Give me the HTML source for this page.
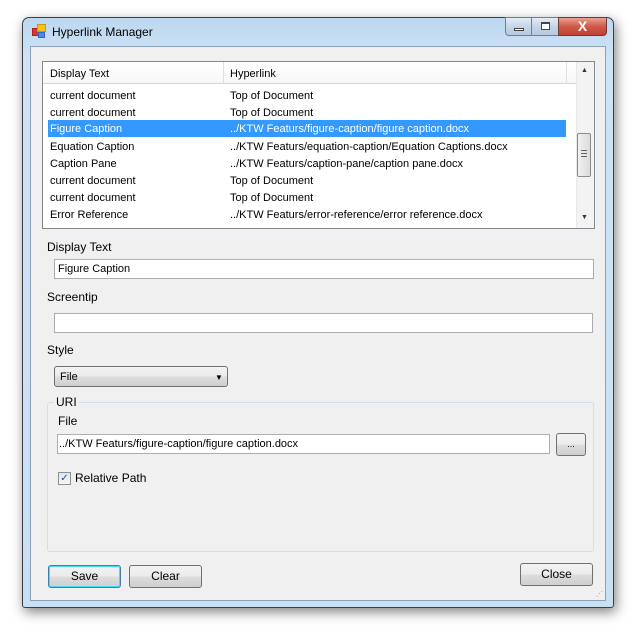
<!DOCTYPE html>
<html><head><style>
*{margin:0;padding:0;box-sizing:border-box}
body{width:644px;height:627px;background:#fff;position:relative;overflow:hidden;font-family:"Liberation Sans",sans-serif;font-size:11px;color:#000}
.a{position:absolute}
.win{left:22px;top:17px;width:592px;height:591px;border:1px solid #3a3f46;border-radius:7px 7px 3px 3px;background:linear-gradient(#bcd7f0,#cfe3f6 40px,#c9dff3);box-shadow:2px 4px 12px rgba(0,0,0,.5)}
.client{left:30px;top:46px;width:576px;height:555px;background:#f0f0f0;border:1px solid #8da2b8}
.tb{background:#fff;border:1px solid #abadb3;border-top-color:#b0b0b0}
.btn{border:1px solid #707070;border-radius:3px;background:linear-gradient(#f2f2f2,#ebebeb 50%,#dddddd 51%,#cfcfcf);text-align:center;font-size:12px}
.row{position:absolute;left:48px;width:518px;height:17px;line-height:17px;font-size:11px}
.row span{position:absolute;top:1px}
.row .c1{left:2px}.row .c2{left:182px}
</style></head><body>
<div class="a win"></div>
<div class="a" style="left:31px;top:23px;width:16px;height:16px">
<div class="a" style="left:1px;top:5px;width:7px;height:8px;background:#d33;border:1px solid #a22"></div>
<div class="a" style="left:6px;top:1px;width:9px;height:8px;background:#f5c21d;border:1px solid #c90"></div>
<div class="a" style="left:7px;top:9px;width:7px;height:6px;background:#4b8be0;border:1px solid #36c"></div>
</div>
<div class="a" style="left:52px;top:25px;font-size:12px">Hyperlink Manager</div>
<div class="a" style="left:505px;top:17px;width:27px;height:19px;border:1px solid #6d7d92;border-radius:0 0 0 4px;background:linear-gradient(#e3ecf6,#c5d5e8 50%,#b7c9de)"><div class="a" style="left:8px;top:10px;width:10px;height:3px;border:1px solid #444;background:#fff"></div></div>
<div class="a" style="left:531px;top:17px;width:28px;height:19px;border:1px solid #6d7d92;background:linear-gradient(#e3ecf6,#c5d5e8 50%,#b7c9de)"><div class="a" style="left:9px;top:4px;width:9px;height:8px;border:1px solid #444;border-top-width:2px;background:#fff"></div></div>
<div class="a" style="left:558px;top:17px;width:49px;height:19px;border:1px solid #6d3a36;border-radius:0 0 4px 0;background:linear-gradient(#e8a093,#d0594a 50%,#c2402f);color:#fff;font-weight:bold;font-size:14px;text-align:center;line-height:16px">X</div>
<div class="a client"></div>
<div class="a" style="left:42px;top:61px;width:553px;height:168px;background:#fff;border:1px solid #828790"></div>
<div class="a" style="left:43px;top:62px;width:533px;height:22px;background:linear-gradient(#fff,#f6f7f9);border-bottom:1px solid #d5d5d5"></div>
<div class="a" style="left:223px;top:62px;width:1px;height:22px;background:#e0e0e0"></div>
<div class="a" style="left:566px;top:62px;width:1px;height:22px;background:#e0e0e0"></div>
<div class="a" style="left:50px;top:68px">Display Text</div>
<div class="a" style="left:230px;top:68px">Hyperlink</div>
<div class="a" style="left:576px;top:62px;width:18px;height:166px;background:#f3f3f3;border-left:1px solid #e8e8e8"></div>
<div class="a" style="left:581px;top:67px;font-size:7px;color:#333">▲</div>
<div class="a" style="left:581px;top:214px;font-size:7px;color:#333">▼</div>
<div class="a" style="left:577px;top:133px;width:14px;height:44px;border:1px solid #8b8b8b;border-radius:2px;background:linear-gradient(90deg,#f0f0f0,#dcdcdc)"><div class="a" style="left:3px;top:16px;width:6px;height:7px;border-top:1px solid #666;border-bottom:1px solid #666"></div><div class="a" style="left:3px;top:19px;width:6px;height:1px;background:#666"></div></div>
<div class="row" style="top:87px"><span class="c1">current document</span><span class="c2">Top of Document</span></div>
<div class="row" style="top:104px"><span class="c1">current document</span><span class="c2">Top of Document</span></div>
<div class="row" style="top:120px;background:#3399ff;color:#fff"><span class="c1">Figure Caption</span><span class="c2">../KTW Featurs/figure-caption/figure caption.docx</span></div>
<div class="row" style="top:138px"><span class="c1">Equation Caption</span><span class="c2">../KTW Featurs/equation-caption/Equation Captions.docx</span></div>
<div class="row" style="top:155px"><span class="c1">Caption Pane</span><span class="c2">../KTW Featurs/caption-pane/caption pane.docx</span></div>
<div class="row" style="top:172px"><span class="c1">current document</span><span class="c2">Top of Document</span></div>
<div class="row" style="top:189px"><span class="c1">current document</span><span class="c2">Top of Document</span></div>
<div class="row" style="top:206px"><span class="c1">Error Reference</span><span class="c2">../KTW Featurs/error-reference/error reference.docx</span></div>
<div class="a" style="left:47px;top:240px;font-size:12px">Display Text</div>
<div class="a tb" style="left:54px;top:259px;width:540px;height:20px"></div>
<div class="a" style="left:58px;top:263px">Figure Caption</div>
<div class="a" style="left:47px;top:290px;font-size:12px">Screentip</div>
<div class="a tb" style="left:54px;top:313px;width:539px;height:20px"></div>
<div class="a" style="left:47px;top:343px;font-size:12px">Style</div>
<div class="a btn" style="left:54px;top:366px;width:174px;height:21px;text-align:left;padding-left:5px;line-height:21px;font-size:11px">File<span class="a" style="left:160px;top:0;font-size:8px">▼</span></div>
<div class="a" style="left:47px;top:402px;width:547px;height:150px;border:1px solid #d5dfe5;border-radius:3px"></div>
<div class="a" style="left:54px;top:395px;background:#f0f0f0;padding:0 2px;font-size:12px">URI</div>
<div class="a" style="left:58px;top:414px;font-size:12px">File</div>
<div class="a tb" style="left:57px;top:434px;width:493px;height:20px"></div>
<div class="a" style="left:59px;top:438px">../KTW Featurs/figure-caption/figure caption.docx</div>
<div class="a btn" style="left:556px;top:433px;width:30px;height:23px;line-height:20px;font-size:9px">...</div>
<div class="a" style="left:58px;top:472px;width:13px;height:13px;border:1px solid #8f8f8f;background:linear-gradient(#dfe5f0,#f4f6fa);color:#2a4a8a;font-size:10px;line-height:11px;text-align:center">✓</div>
<div class="a" style="left:75px;top:471px;font-size:12px">Relative Path</div>
<div class="a btn" style="left:48px;top:565px;width:73px;height:23px;line-height:21px;border-color:#3c7fb1;box-shadow:inset 0 0 0 1px #48d8fb">Save</div>
<div class="a btn" style="left:129px;top:565px;width:73px;height:23px;line-height:21px">Clear</div>
<div class="a btn" style="left:520px;top:563px;width:73px;height:23px;line-height:21px">Close</div>
<div class="a" style="left:596px;top:590px;font-size:7px;color:#999;letter-spacing:-1px">⋰</div>
</body></html>
